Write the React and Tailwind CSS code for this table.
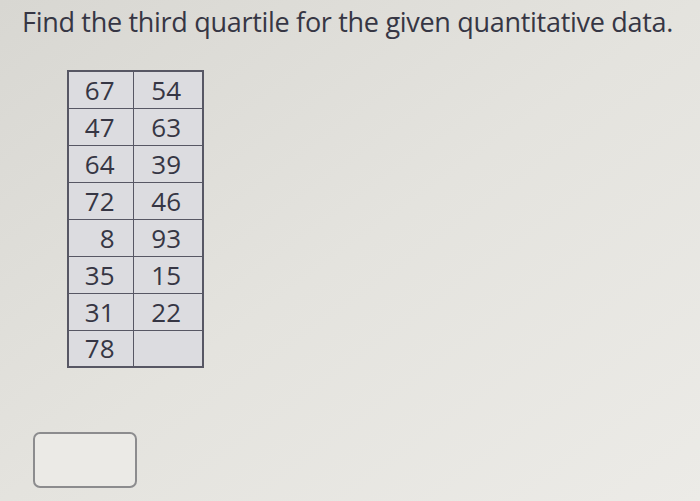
const rows = [
  ["67", "54"],
  ["47", "63"],
  ["64", "39"],
  ["72", "46"],
  ["8", "93"],
  ["35", "15"],
  ["31", "22"],
  ["78", ""],
];

export default function App() {
  return (
    <div
      className="w-[700px] h-[501px] overflow-hidden bg-gradient-to-br from-[#d8d7d2] via-[#e4e3de] to-[#ecebe7] text-[#363644]"
      style={{ fontFamily: "'Open Sans', 'Liberation Sans', sans-serif" }}
    >
      <h1 className="pl-[22px] pt-[4px] text-[27px] leading-[36px] font-medium tracking-[-0.3px]">
        Find the third quartile for the given quantitative data.
      </h1>

      <table className="ml-[67px] mt-[30px] border-collapse border-2 border-[#575764] text-[26px] font-medium">
        <tbody>
          {rows.map((row, i) => (
            <tr key={i} className="h-[37px]">
              <td className="w-[65px] border border-[#575764] bg-[#dcdce0] pr-[18px] text-right leading-none">
                {row[0]}
              </td>
              <td className="w-[70px] border border-[#575764] bg-[#dcdce0] pr-[21px] text-right leading-none">
                {row[1]}
              </td>
            </tr>
          ))}
        </tbody>
      </table>

      <div className="ml-[33px] mt-[64px] w-[104px] h-[56px] rounded-[7px] border-2 border-[#8c8c8e] bg-[#ebeae6]"></div>
    </div>
  );
}
